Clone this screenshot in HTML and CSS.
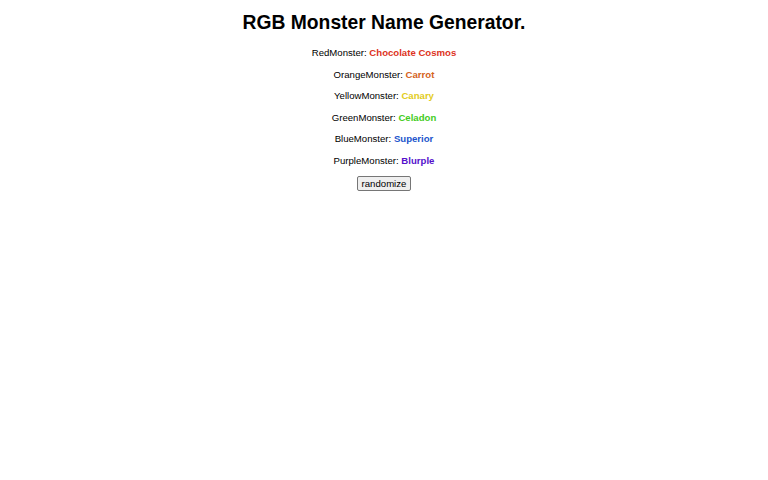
FILE: index.html
```html
<!DOCTYPE html>
<html>
<head>
<meta charset="utf-8">
<title>RGB Monster Name Generator</title>
<link rel="stylesheet" href="styles.css">
</head>
<body>
<main class="generator">
  <h1 class="title">RGB Monster Name Generator.</h1>
  <p class="row">RedMonster: <span class="name red">Chocolate Cosmos</span></p>
  <p class="row">OrangeMonster: <span class="name orange">Carrot</span></p>
  <p class="row">YellowMonster: <span class="name yellow">Canary</span></p>
  <p class="row">GreenMonster: <span class="name green">Celadon</span></p>
  <p class="row">BlueMonster: <span class="name blue">Superior</span></p>
  <p class="row">PurpleMonster: <span class="name purple">Blurple</span></p>
  <button class="randomize" type="button">randomize</button>
</main>
</body>
</html>
```

FILE: styles.css
```css
body {
  margin: 8px;
  background: #ffffff;
  color: #000000;
  font-family: "Liberation Sans", Arial, sans-serif;
  font-size: 9.6px;
}

.generator {
  text-align: center;
}

.title {
  font-size: 19.3px;
  font-weight: bold;
  margin: 4px 0 13px;
}

.row {
  margin: 10px 0;
  line-height: 11.5px;
}

.name {
  font-weight: bold;
}

.red { color: #dd3322; }
.orange { color: #d4621c; }
.yellow { color: #e2cc22; }
.green { color: #44cc22; }
.blue { color: #2255cc; }
.purple { color: #5511cc; }

.randomize {
  font-family: "Liberation Sans", Arial, sans-serif;
  font-size: 9.6px;
  padding: 1px 4px;
  background: #efefef;
  border: 1px solid #767676;
  border-radius: 2px;
  color: #000;
}
```
